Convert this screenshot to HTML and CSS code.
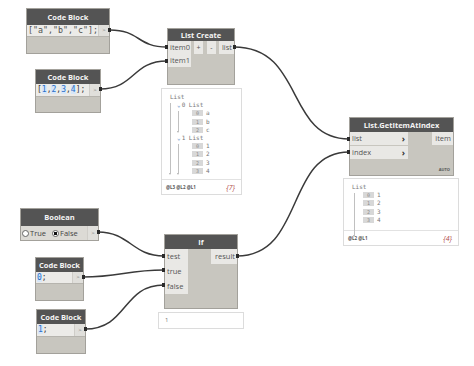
FILE: index.html
```html
<!DOCTYPE html>
<html lang="en">
<head>
    <meta charset="UTF-8">
    <title>Dynamo Graph - List.GetItemAtIndex</title>
    <link rel="stylesheet" href="styles.css">
</head>
<body>
    <div class="canvas">
        <svg class="wires" width="474" height="366" viewBox="0 0 474 366">
            <g fill="none" stroke="#3a3a3a" stroke-width="1.5">
                <path d="M110,30 C140,30 137,47 167,47"/>
                <path d="M100,89 C135,89 132,61 167,61"/>
                <path d="M234,47 C305,47 285,139 349,139"/>
                <path d="M237,256 C305,256 285,152 349,152"/>
                <path d="M98,232 C130,232 132,256 164,256"/>
                <path d="M83,277 C120,277 127,270 164,270"/>
                <path d="M85,329 C128,329 122,285 164,285"/>
            </g>
            <g fill="#2a2a2a">
                <rect x="165" y="45" width="3" height="4"/>
                <rect x="165" y="59" width="3" height="4"/>
                <rect x="347" y="137" width="3" height="4"/>
                <rect x="347" y="150" width="3" height="4"/>
                <rect x="162" y="254" width="3" height="4"/>
                <rect x="162" y="268" width="3" height="4"/>
                <rect x="162" y="283" width="3" height="4"/>
                <rect x="108" y="28" width="3" height="4"/>
                <rect x="99" y="87" width="3" height="4"/>
                <rect x="233" y="45" width="3" height="4"/>
                <rect x="236" y="254" width="3" height="4"/>
                <rect x="97" y="230" width="3" height="4"/>
                <rect x="82" y="275" width="3" height="4"/>
                <rect x="84" y="327" width="3" height="4"/>
            </g>
        </svg>

        <!-- code block: strings -->
        <div class="node cb1">
            <div class="node-head">Code Block</div>
            <div class="code-row">
                <div class="code"><span class="str">["a","b","c"];</span></div>
                <div class="out-port">&gt;</div>
            </div>
        </div>

        <!-- code block: numbers -->
        <div class="node cb2">
            <div class="node-head">Code Block</div>
            <div class="code-row">
                <div class="code">[<span class="num">1</span>,<span class="num">2</span>,<span class="num">3</span>,<span class="num">4</span>];</div>
                <div class="out-port">&gt;</div>
            </div>
        </div>

        <!-- list create -->
        <div class="node lc">
            <div class="node-head">List Create</div>
            <div class="ports">
                <div class="ins">
                    <div class="port in">item0</div>
                    <div class="port in">item1</div>
                </div>
                <div class="btns">
                    <div class="btn">+</div>
                    <div class="btn">-</div>
                </div>
                <div class="outs">
                    <div class="port out">list</div>
                </div>
            </div>
        </div>

        <div class="preview pv-lc">
            <div class="pv-body">
                <div class="tree-line outer"></div>
                <div class="tree-line inner1"></div>
                <div class="tree-line inner2"></div>
                <div class="pv-row">List</div>
                <div class="pv-row lvl1"><span class="caret">⌄</span>0 List</div>
                <div class="pv-row lvl2"><span class="idx">0</span>a</div>
                <div class="pv-row lvl2"><span class="idx">1</span>b</div>
                <div class="pv-row lvl2"><span class="idx">2</span>c</div>
                <div class="pv-row lvl1"><span class="caret">⌄</span>1 List</div>
                <div class="pv-row lvl2"><span class="idx">0</span>1</div>
                <div class="pv-row lvl2"><span class="idx">1</span>2</div>
                <div class="pv-row lvl2"><span class="idx">2</span>3</div>
                <div class="pv-row lvl2"><span class="idx">3</span>4</div>
            </div>
            <div class="pv-foot">
                <span class="levels">@L3 @L2 @L1</span>
                <span class="count">{7}</span>
            </div>
        </div>

        <!-- get item at index -->
        <div class="node gi">
            <div class="node-head">List.GetItemAtIndex</div>
            <div class="ports">
                <div class="ins wide">
                    <div class="port in">list<span class="chev">›</span></div>
                    <div class="port in">index<span class="chev">›</span></div>
                </div>
                <div class="outs">
                    <div class="port out">item</div>
                </div>
            </div>
            <div class="lacing">AUTO</div>
        </div>

        <div class="preview pv-gi">
            <div class="pv-body">
                <div class="tree-line single"></div>
                <div class="pv-row">List</div>
                <div class="pv-row lvl1b"><span class="idx">0</span>1</div>
                <div class="pv-row lvl1b"><span class="idx">1</span>2</div>
                <div class="pv-row lvl1b"><span class="idx">2</span>3</div>
                <div class="pv-row lvl1b"><span class="idx">3</span>4</div>
            </div>
            <div class="pv-foot">
                <span class="levels">@L2 @L1</span>
                <span class="count">{4}</span>
            </div>
        </div>

        <!-- boolean -->
        <div class="node bo">
            <div class="node-head">Boolean</div>
            <div class="code-row">
                <div class="radios">
                    <span class="radio"></span>True
                    <span class="radio on"></span>False
                </div>
                <div class="out-port">&gt;</div>
            </div>
        </div>

        <div class="node cb3">
            <div class="node-head">Code Block</div>
            <div class="code-row">
                <div class="code"><span class="num">0</span>;</div>
                <div class="out-port">&gt;</div>
            </div>
        </div>

        <div class="node cb4">
            <div class="node-head">Code Block</div>
            <div class="code-row">
                <div class="code"><span class="num">1</span>;</div>
                <div class="out-port">&gt;</div>
            </div>
        </div>

        <!-- if -->
        <div class="node if">
            <div class="node-head">If</div>
            <div class="ports">
                <div class="ins">
                    <div class="port in">test</div>
                    <div class="port in">true</div>
                    <div class="port in">false</div>
                </div>
                <div class="outs">
                    <div class="port out">result</div>
                </div>
            </div>
        </div>

        <div class="preview pv-if">
            <div class="pv-single">1</div>
        </div>
    </div>
</body>
</html>
```

FILE: styles.css
```css
body {
    margin: 0;
    background: #ffffff;
    font-family: 'Open Sans', 'DejaVu Sans', sans-serif;
}

.canvas {
    position: relative;
    width: 474px;
    height: 366px;
    overflow: hidden;
    background: #ffffff;
}

.wires {
    position: absolute;
    left: 0;
    top: 0;
    z-index: 2;
}

/* nodes */

.node {
    position: absolute;
    box-sizing: border-box;
    background: #c8c6bf;
    border: 1px solid #a3a19b;
    display: flex;
    flex-direction: column;
    z-index: 1;
}

.node-head {
    height: 14px;
    background: #545454;
    color: #f4f4f4;
    font-size: 7.5px;
    font-weight: 700;
    line-height: 14px;
    text-align: center;
    white-space: nowrap;
    overflow: hidden;
}

.code-row {
    display: flex;
    height: 12px;
    border-bottom: 1px solid #b6b4ae;
}

.code {
    flex: 1;
    background: #ecebe8;
    font-family: 'DejaVu Sans Mono', 'Liberation Mono', monospace;
    font-size: 8px;
    line-height: 12px;
    color: #3c3c3c;
    padding-left: 1px;
    white-space: nowrap;
    overflow: hidden;
}

.str {
    color: #505050;
}

.num {
    color: #2a6fc7;
    background: #d6e6f8;
}

.out-port {
    width: 10px;
    background: #e0dfdb;
    border-left: 1px solid #cfcdc8;
    font-size: 6px;
    color: #777;
    line-height: 12px;
    text-align: center;
}

.ports {
    display: flex;
    align-items: flex-start;
}

.ins {
    display: flex;
    flex-direction: column;
    width: 23px;
}

.ins.wide {
    width: 58px;
}

.outs {
    margin-left: auto;
    display: flex;
    flex-direction: column;
}

.port {
    height: 14px;
    line-height: 14px;
    font-size: 7.5px;
    color: #555;
    background: #e9e8e5;
    white-space: nowrap;
}

.port.in {
    padding-left: 2px;
    display: flex;
    justify-content: space-between;
    padding-right: 3px;
}

.port.out {
    padding: 0 2px 0 3px;
    text-align: right;
}

.chev {
    font-weight: 700;
    font-size: 9px;
    color: #333;
}

.btns {
    display: flex;
    gap: 4px;
    margin-left: 3px;
}

.btn {
    width: 9px;
    height: 13px;
    line-height: 13px;
    background: #e9e8e5;
    font-size: 7px;
    color: #555;
    text-align: center;
}

.lacing {
    margin-top: auto;
    text-align: right;
    font-size: 4px;
    font-weight: 700;
    color: #555;
    padding: 0 3px 3px 0;
}

.radios {
    flex: 1;
    display: flex;
    align-items: center;
    background: #dcdad5;
    font-size: 7.5px;
    color: #444;
    gap: 1px;
    padding-left: 1px;
}

.radio {
    display: inline-block;
    box-sizing: border-box;
    width: 7px;
    height: 7px;
    border: 1px solid #666;
    border-radius: 50%;
    background: #fff;
}

.radio.on {
    margin-left: 5px;
    background: radial-gradient(circle, #111 0 1.6px, #fff 2px);
}

.cb1 { left: 26px; top: 8px; width: 84px; height: 46px; }
.cb1 .node-head { height: 16px; line-height: 16px; }
.cb1 .code-row { height: 11px; }
.cb1 .code, .cb1 .out-port { line-height: 11px; }
.cb1 .code { font-size: 8.3px; }

.cb2 { left: 35px; top: 69px; width: 66px; height: 44px; }

.lc { left: 167px; top: 28px; width: 68px; height: 57px; }
.lc .node-head { height: 12px; line-height: 12px; }
.lc .port { height: 13px; line-height: 13px; }

.gi { left: 349px; top: 117px; width: 105px; height: 59px; }
.gi .port { height: 13px; line-height: 13px; }
.gi .ins .port + .port { margin-top: 1px; }

.bo { left: 20px; top: 208px; width: 79px; height: 33px; }
.bo .node-head { height: 17px; line-height: 17px; }
.bo .code-row { height: 14px; border-bottom: none; }
.bo .out-port { line-height: 14px; }

.cb3 { left: 35px; top: 257px; width: 49px; height: 44px; }
.cb3 .code-row { height: 11px; }
.cb3 .code, .cb3 .out-port { line-height: 11px; }

.cb4 { left: 36px; top: 309px; width: 50px; height: 45px; }

.if { left: 164px; top: 234px; width: 74px; height: 75px; }
.if .port { height: 15px; line-height: 15px; }
.if .port.out { width: 21px; }

/* previews */

.preview {
    position: absolute;
    box-sizing: border-box;
    background: #ffffff;
    border: 1px solid #dcdcdc;
    display: flex;
    flex-direction: column;
}

.pv-body {
    position: relative;
    flex: 1;
    padding-top: 4px;
}

.pv-row {
    height: 8.2px;
    line-height: 8.2px;
    font-family: 'DejaVu Sans Mono', 'Liberation Mono', monospace;
    font-size: 6px;
    color: #777;
    padding-left: 8px;
    display: flex;
    align-items: center;
    white-space: nowrap;
}

.pv-row.lvl1 { padding-left: 15px; }
.pv-row.lvl2 { padding-left: 30px; }
.pv-row.lvl1b { padding-left: 19px; }

.caret {
    font-size: 6px;
    color: #4a7fc0;
    margin-right: 1px;
}

.idx {
    display: inline-block;
    width: 11px;
    height: 6px;
    line-height: 6px;
    background: #d8d8d8;
    color: #888;
    font-size: 5px;
    text-align: center;
    margin-right: 3px;
}

.tree-line {
    position: absolute;
    width: 1px;
    background: #c0c0c0;
}

.tree-line::after {
    content: '';
    position: absolute;
    left: -1px;
    bottom: -2px;
    border-left: 1.5px solid transparent;
    border-right: 1.5px solid transparent;
    border-top: 2px solid #aaa;
}

.tree-line.outer { left: 8px; top: 14px; height: 70px; }
.tree-line.inner1 { left: 16px; top: 22px; height: 20px; }
.tree-line.inner2 { left: 16px; top: 55px; height: 29px; }
.tree-line.single { left: 10px; top: 14px; height: 42px; }

.pv-foot {
    height: 14px;
    border-top: 1px solid #e2e2e2;
    display: flex;
    align-items: center;
    justify-content: space-between;
    padding: 0 6px 0 4px;
}

.levels {
    font-size: 4.5px;
    font-weight: 700;
    color: #555;
}

.count {
    font-size: 7px;
    font-style: italic;
    color: #b04a4a;
}

.pv-lc { left: 161px; top: 88px; width: 81px; height: 107px; }
.pv-gi { left: 343px; top: 178px; width: 116px; height: 68px; }
.pv-if { left: 158px; top: 312px; width: 86px; height: 17px; }

.pv-single {
    font-size: 6px;
    color: #777;
    line-height: 15px;
    padding-left: 6px;
}
```
